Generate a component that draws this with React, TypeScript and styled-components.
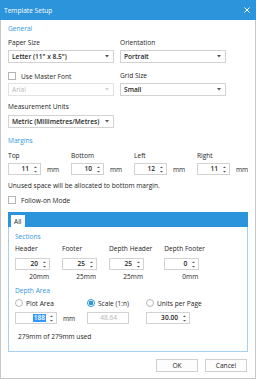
import styled, { createGlobalStyle } from 'styled-components'

const GlobalStyle = createGlobalStyle`
  * { box-sizing: border-box; }
  html, body { margin: 0; padding: 0; background: #ffffff; }
  body {
    font-family: "Open Sans", "Noto Sans", "Liberation Sans", sans-serif;
    font-size: 6.6px;
    color: #1e1e1e;
  }
`;

const BLUE = '#2b94db';

const Window = styled.div`
  width: 256px;
  height: 379px;
  display: flex;
  flex-direction: column;
  border: 1px solid #c6c6c6;
  border-top: none;
  background: #fff;
`;

const TitleBar = styled.div`
  height: 20px;
  margin: 0 -1px;
  background: ${BLUE};
  color: #fff;
  display: flex;
  align-items: center;
  justify-content: space-between;
  padding: 0 6px 0 4px;
  font-size: 6.6px;
`;

const CloseIcon = () => (
  <svg width="6" height="6" viewBox="0 0 6 6">
    <path d="M0.5 0.5 L5.5 5.5 M5.5 0.5 L0.5 5.5" stroke="#fff" strokeWidth="1" />
  </svg>
);

const Body = styled.div`
  flex: 1;
  display: flex;
  flex-direction: column;
  padding: 4px 7px 0 7px;
`;

const Heading = styled.div<{ $mt?: number }>`
  color: #3398de;
  line-height: 10px;
  height: 10px;
  margin-top: ${({ $mt }) => $mt ?? 0}px;
`;

const TwoCols = styled.div<{ $mt: number }>`
  display: grid;
  grid-template-columns: 106px 106px;
  column-gap: 6px;
  margin-top: ${({ $mt }) => $mt}px;
`;

const Field = styled.div<{ $gap?: number }>`
  display: flex;
  flex-direction: column;
  gap: ${({ $gap }) => $gap ?? 2}px;
`;

const Label = styled.div`
  line-height: 10px;
  height: 10px;
  white-space: nowrap;
`;

const SelectBox = styled.div<{ $disabled?: boolean; $w?: number }>`
  height: 13px;
  width: ${({ $w }) => ($w ? `${$w}px` : '100%')};
  border: 1px solid ${({ $disabled }) => ($disabled ? '#e2e2e2' : '#d2d2d2')};
  display: flex;
  align-items: center;
  justify-content: space-between;
  padding: 0 4px 0 3px;
  color: ${({ $disabled }) => ($disabled ? '#b8b8b8' : '#1e1e1e')};
  font-weight: ${({ $disabled }) => ($disabled ? 400 : 600)};
  white-space: nowrap;
`;

const Caret = ({ light }: { light?: boolean }) => (
  <svg width="4" height="3" viewBox="0 0 4 3">
    <path d="M0 0 L4 0 L2 2.5 Z" fill={light ? '#cfcfcf' : '#555'} />
  </svg>
);

const CheckRow = styled.label<{ $mt?: number }>`
  display: flex;
  align-items: center;
  gap: 5px;
  height: 10px;
  margin-top: ${({ $mt }) => $mt ?? 0}px;
  white-space: nowrap;
`;

const CheckBox = styled.span`
  width: 8px;
  height: 8px;
  border: 1px solid #b4b4b4;
  background: #fff;
  display: inline-block;
`;

const FourCols = styled.div<{ $mt: number }>`
  display: grid;
  grid-template-columns: 63px 63px 63px 63px;
  margin-top: ${({ $mt }) => $mt}px;
`;

const UnitRow = styled.div`
  display: flex;
  align-items: center;
  gap: 6px;
`;

const SpinBox = styled.div<{ $w: number }>`
  width: ${({ $w }) => $w}px;
  height: 12px;
  border: 1px solid #d2d2d2;
  display: flex;
  align-items: center;
  justify-content: flex-end;
  gap: 4px;
  padding-right: 3px;
  background: #fff;
`;

const SpinValue = styled.span<{ $selected?: boolean; $disabled?: boolean }>`
  line-height: 8px;
  padding: 0 1px;
  background: ${({ $selected }) => ($selected ? '#3399ff' : 'transparent')};
  color: ${({ $selected, $disabled }) =>
    $selected ? '#fff' : $disabled ? '#b5b5b5' : '#1e1e1e'};
  font-weight: ${({ $disabled }) => ($disabled ? 400 : 600)};
`;

const ArrowGap = styled.span`
  width: 3px;
`;

const Arrows = () => (
  <svg width="3" height="7" viewBox="0 0 3 7">
    <path d="M0 2 L3 2 L1.5 0.5 Z M0 5 L3 5 L1.5 6.5 Z" fill="#555" />
  </svg>
);

const Spinner = ({
  value,
  w,
  selected,
  disabled,
}: {
  value: string;
  w: number;
  selected?: boolean;
  disabled?: boolean;
}) => (
  <SpinBox $w={w}>
    <SpinValue $selected={selected} $disabled={disabled}>
      {value}
    </SpinValue>
    {disabled ? <ArrowGap /> : <Arrows />}
  </SpinBox>
);

const Note = styled.div`
  margin-top: 6px;
  line-height: 10px;
  height: 10px;
  white-space: nowrap;
`;

const TabPanel = styled.div`
  margin-top: 7px;
  border: 1px solid #a6d0f0;
  border-top: none;
  display: flex;
  flex-direction: column;
  height: 140px;
`;

const TabStrip = styled.div`
  height: 15px;
  margin: 0 -1px;
  background: ${BLUE};
  display: flex;
  align-items: flex-end;
  padding-left: 3px;
`;

const Tab = styled.div`
  height: 12px;
  padding: 0 3px;
  background: #fff;
  display: flex;
  align-items: center;
`;

const PanelBody = styled.div`
  padding: 5px 6px 0 6px;
  display: flex;
  flex-direction: column;
`;

const SectionRow = styled.div`
  display: flex;
  gap: 12px;
  margin-top: 2px;
`;

const SectionCol = styled.div`
  display: flex;
  flex-direction: column;
  gap: 4px;
`;

const SpinStack = styled.div`
  width: 35px;
  display: flex;
  flex-direction: column;
  gap: 2px;
`;

const SubText = styled.div`
  text-align: right;
  line-height: 10px;
  height: 10px;
  padding-right: 1px;
`;

const DepthGrid = styled.div`
  display: grid;
  grid-template-columns: 72px 59px auto;
  row-gap: 4px;
  margin-top: 2px;
`;

const RadioRow = styled.div`
  display: flex;
  align-items: center;
  gap: 3px;
  height: 10px;
  white-space: nowrap;
`;

const Radio = styled.span<{ $checked?: boolean }>`
  width: 8px;
  height: 8px;
  border-radius: 50%;
  border: 1px solid ${({ $checked }) => ($checked ? BLUE : '#b8b8b8')};
  background: ${({ $checked }) =>
    $checked ? `radial-gradient(circle, ${BLUE} 0 2px, #fff 2.5px)` : '#fff'};
  display: inline-block;
`;

const Used = styled.div`
  margin-top: 8px;
  margin-left: 3px;
  line-height: 10px;
  height: 10px;
`;

const Footer = styled.div`
  display: flex;
  justify-content: flex-end;
  gap: 7px;
  margin-top: 7px;
  padding-right: 1px;
`;

const Button = styled.button`
  width: 42px;
  height: 13px;
  border: 1px solid #cfcfcf;
  background: #fdfdfd;
  font-family: inherit;
  font-size: 6.6px;
  color: #1e1e1e;
  padding: 0;
`;

const MeasureField = styled(Field)`
  margin-top: 6px;
`;

const margins = [
  { label: 'Top', value: '11' },
  { label: 'Bottom', value: '10' },
  { label: 'Left', value: '12' },
  { label: 'Right', value: '11' },
];

const sections = [
  { label: 'Header', value: '20' },
  { label: 'Footer', value: '25' },
  { label: 'Depth Header', value: '25' },
  { label: 'Depth Footer', value: '0' },
];

export default function App() {
  return (
    <>
      <GlobalStyle />
      <Window>
        <TitleBar>
          <span>Template Setup</span>
          <CloseIcon />
        </TitleBar>
        <Body>
          <Heading>General</Heading>
          <TwoCols $mt={4}>
            <Field>
              <Label>Paper Size</Label>
              <SelectBox>
                <span>Letter (11" x 8.5")</span>
                <Caret />
              </SelectBox>
            </Field>
            <Field>
              <Label>Orientation</Label>
              <SelectBox>
                <span>Portrait</span>
                <Caret />
              </SelectBox>
            </Field>
          </TwoCols>
          <TwoCols $mt={8}>
            <Field>
              <CheckRow>
                <CheckBox />
                <span>Use Master Font</span>
              </CheckRow>
              <SelectBox $disabled>
                <span>Arial</span>
                <Caret light />
              </SelectBox>
            </Field>
            <Field>
              <Label>Grid Size</Label>
              <SelectBox>
                <span>Small</span>
                <Caret />
              </SelectBox>
            </Field>
          </TwoCols>
          <MeasureField $gap={3}>
            <Label>Measurement Units</Label>
            <SelectBox $w={106}>
              <span>Metric (Millimetres/Metres)</span>
              <Caret />
            </SelectBox>
          </MeasureField>
          <Heading $mt={8}>Margins</Heading>
          <FourCols $mt={5}>
            {margins.map((m) => (
              <Field key={m.label}>
                <Label>{m.label}</Label>
                <UnitRow>
                  <Spinner value={m.value} w={33} />
                  <span>mm</span>
                </UnitRow>
              </Field>
            ))}
          </FourCols>
          <Note>Unused space will be allocated to bottom margin.</Note>
          <CheckRow $mt={4}>
            <CheckBox />
            <span>Follow-on Mode</span>
          </CheckRow>
          <TabPanel>
            <TabStrip>
              <Tab>All</Tab>
            </TabStrip>
            <PanelBody>
              <Heading>Sections</Heading>
              <SectionRow>
                {sections.map((s) => (
                  <SectionCol key={s.label}>
                    <Label>{s.label}</Label>
                    <SpinStack>
                      <Spinner value={s.value} w={35} />
                      <SubText>{s.value}mm</SubText>
                    </SpinStack>
                  </SectionCol>
                ))}
              </SectionRow>
              <Heading $mt={4}>Depth Area</Heading>
              <DepthGrid>
                <RadioRow>
                  <Radio />
                  <span>Plot Area</span>
                </RadioRow>
                <RadioRow>
                  <Radio $checked />
                  <span>Scale (1:n)</span>
                </RadioRow>
                <RadioRow>
                  <Radio />
                  <span>Units per Page</span>
                </RadioRow>
                <UnitRow>
                  <Spinner value="188" w={42} selected />
                  <span>mm</span>
                </UnitRow>
                <Spinner value="48.64" w={42} disabled />
                <Spinner value="30.00" w={44} />
              </DepthGrid>
              <Used>279mm of 279mm used</Used>
            </PanelBody>
          </TabPanel>
          <Footer>
            <Button>OK</Button>
            <Button>Cancel</Button>
          </Footer>
        </Body>
      </Window>
    </>
  );
}
